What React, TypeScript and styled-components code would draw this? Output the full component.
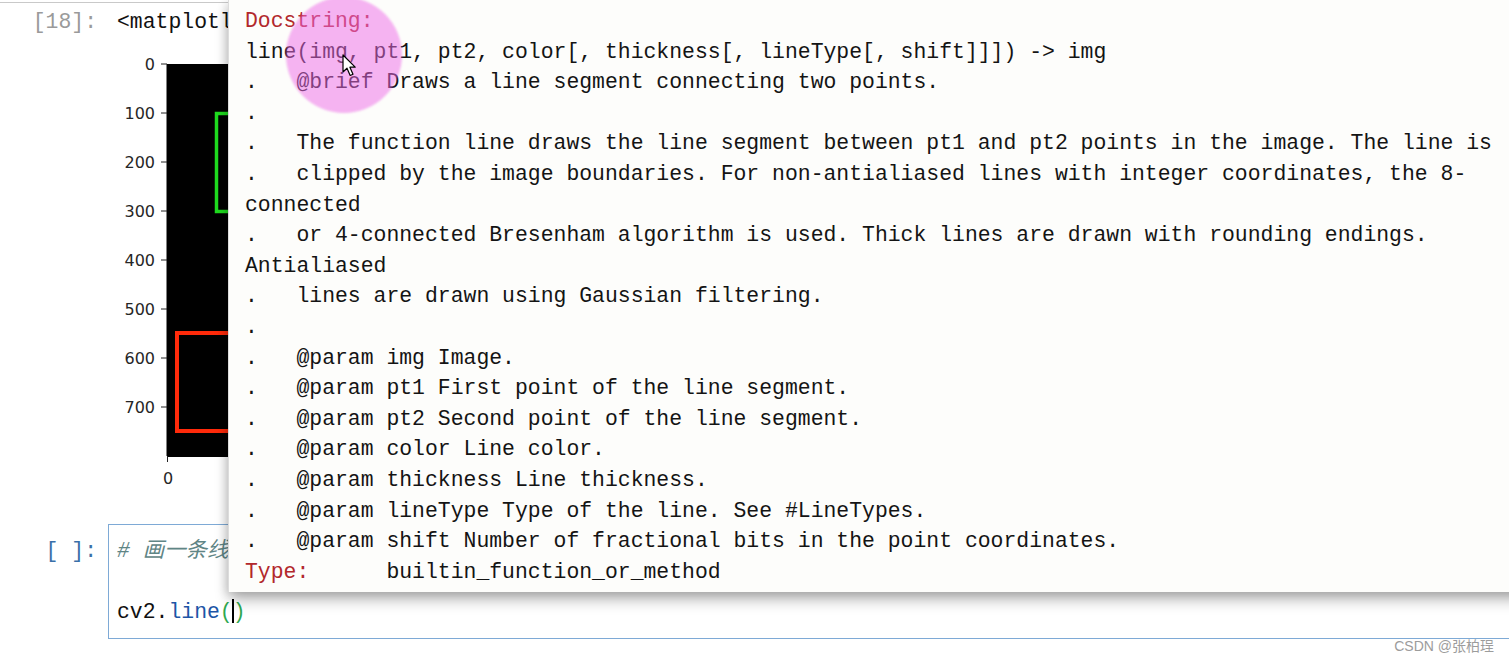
import React from 'react'
import styled, { createGlobalStyle } from 'styled-components'

const mono = `'Liberation Mono', 'DejaVu Sans Mono', 'Noto Sans CJK SC', monospace`

const GlobalStyle = createGlobalStyle`
	html, body {
		margin: 0;
		padding: 0;
		background: #ffffff;
		overflow: hidden;
	}
`

const Page = styled.div`
	position: relative;
	width: 1509px;
	height: 662px;
	overflow: hidden;
	box-sizing: border-box;
	padding-top: 2px;
	font-family: ${mono};
	font-size: 21.43px;
	line-height: 30.6px;
	color: #111;
`

const Divider = styled.div`
	height: 1px;
	background: #c9c9c9;
`

const Cell = styled.div<{ $gap?: number }>`
	display: flex;
	margin-top: ${p => p.$gap ?? 0}px;
`

const Prompt = styled.div<{ $color: string; $top?: number }>`
	width: 108px;
	flex: none;
	box-sizing: border-box;
	padding-right: 11px;
	padding-top: ${p => p.$top ?? 0}px;
	text-align: right;
	color: ${p => p.$color};
	white-space: pre;
`

const OutputArea = styled.div`
	display: flex;
	flex-direction: column;
	padding-left: 9px;
	padding-top: 3.7px;
`

const Line = styled.div`
	white-space: pre;
	min-height: 30.6px;
`

const PlotSvg = styled.svg`
	display: block;
	margin-top: -1.3px;
	font-family: 'DejaVu Sans', sans-serif;
`

const InputBox = styled.div`
	flex: 1;
	border: 1px solid #7eaad6;
	padding: 11px 8px 10px;
	margin-right: -6px;
`

const Comment = styled.span`
	color: #5f8585;
	font-style: italic;
`

const Prop = styled.span`
	color: #1d55a6;
`

const Bracket = styled.span`
	color: #2fa84f;
`

const Caret = styled.span`
	display: inline-block;
	width: 2px;
	height: 24px;
	margin: 0 -1px;
	vertical-align: -5px;
	background: #000;
`

const Tooltip = styled.div`
	position: absolute;
	left: 228px;
	top: 0;
	width: 1400px;
	box-sizing: border-box;
	padding: 6px 0 5px 16px;
	background: #fdfdfb;
	border-left: 1px solid #dcdcdc;
	box-shadow: 0 9px 14px -2px rgba(0, 0, 0, 0.32), -3px 2px 8px rgba(0, 0, 0, 0.1);
	color: #141414;
	z-index: 2;
`

const Head = styled.span`
	color: #b2282c;
`

const Highlight = styled.div`
	position: absolute;
	left: 286px;
	top: -3px;
	width: 116px;
	height: 116px;
	border-radius: 50%;
	background: rgba(238, 105, 232, 0.5);
	filter: blur(1.2px);
	z-index: 3;
`

const Pointer = styled.svg`
	position: absolute;
	left: 342px;
	top: 54px;
	z-index: 4;
`

const Watermark = styled.div`
	position: absolute;
	right: 15px;
	bottom: 7px;
	font-family: 'Liberation Sans', 'Noto Sans CJK SC', sans-serif;
	font-size: 14px;
	line-height: 18px;
	color: #9c9c9c;
	z-index: 5;
`

const docLines = [
	'line(img, pt1, pt2, color[, thickness[, lineType[, shift]]]) -> img',
	'.   @brief Draws a line segment connecting two points.',
	'.',
	'.   The function line draws the line segment between pt1 and pt2 points in the image. The line is',
	'.   clipped by the image boundaries. For non-antialiased lines with integer coordinates, the 8-',
	'connected',
	'.   or 4-connected Bresenham algorithm is used. Thick lines are drawn with rounding endings.',
	'Antialiased',
	'.   lines are drawn using Gaussian filtering.',
	'.',
	'.   @param img Image.',
	'.   @param pt1 First point of the line segment.',
	'.   @param pt2 Second point of the line segment.',
	'.   @param color Line color.',
	'.   @param thickness Line thickness.',
	'.   @param lineType Type of the line. See #LineTypes.',
	'.   @param shift Number of fractional bits in the point coordinates.',
]

const ticks = [0, 100, 200, 300, 400, 500, 600, 700]

const Plot = () => (
	<PlotSvg width={200} height={455}>
		<rect x={50} y={28} width={150} height={392} fill="#000" />
		<rect x={99.5} y={77.5} width={200} height={98} fill="none" stroke="#1fdc1f" strokeWidth={3.5} />
		<rect x={60} y={297} width={200} height={98} fill="none" stroke="#ff2a0a" strokeWidth={4} />
		<line x1={50} y1={28} x2={50} y2={420} stroke="#000" strokeWidth={1} />
		<line x1={50} y1={420.5} x2={200} y2={420.5} stroke="#000" strokeWidth={1} />
		{ticks.map(t => {
			const y = 28 + t * 0.49
			return (
				<g key={t}>
					<line x1={44} y1={y} x2={50} y2={y} stroke="#222" strokeWidth={1} />
					<text x={38} y={y} fontSize={16} fill="#262626" textAnchor="end" dominantBaseline="central">
						{t}
					</text>
				</g>
			)
		})}
		<line x1={50.5} y1={420} x2={50.5} y2={426} stroke="#222" strokeWidth={1} />
		<text x={51} y={442} fontSize={16} fill="#262626" textAnchor="middle" dominantBaseline="central">
			0
		</text>
	</PlotSvg>
)

const App = () => (
	<Page>
		<GlobalStyle />
		<Divider />

		<Cell>
			<Prompt $color="#9a9a9a" $top={3.7}>
				[18]:
			</Prompt>
			<OutputArea>
				<Line>{'<matplotlib.image.AxesImage at 0x1f6c2a3b1c0>'}</Line>
				<Plot />
			</OutputArea>
		</Cell>

		<Cell $gap={33}>
			<Prompt $color="#3a6fa8" $top={12}>
				[ ]:
			</Prompt>
			<InputBox>
				<Line>
					<Comment># 画一条线</Comment>
				</Line>
				<Line> </Line>
				<Line>
					cv2.<Prop>line</Prop>
					<Bracket>(</Bracket>
					<Caret />
					<Bracket>)</Bracket>
				</Line>
			</InputBox>
		</Cell>

		<Tooltip>
			<Line>
				<Head>Docstring:</Head>
			</Line>
			{docLines.map((l, i) => (
				<Line key={i}>{l}</Line>
			))}
			<Line>
				<Head>Type:</Head>
				{'      builtin_function_or_method'}
			</Line>
		</Tooltip>

		<Highlight />
		<Pointer width={16} height={24} viewBox="0 0 16 24">
			<path d="M1 1 L1 18 L5 14.2 L8.2 21.5 L11 20.3 L7.9 13.2 L13.2 13.2 Z" fill="#fff" stroke="#000" strokeWidth={1.2} strokeLinejoin="round" />
		</Pointer>

		<Watermark>CSDN @张柏珵</Watermark>
	</Page>
)

export default App
